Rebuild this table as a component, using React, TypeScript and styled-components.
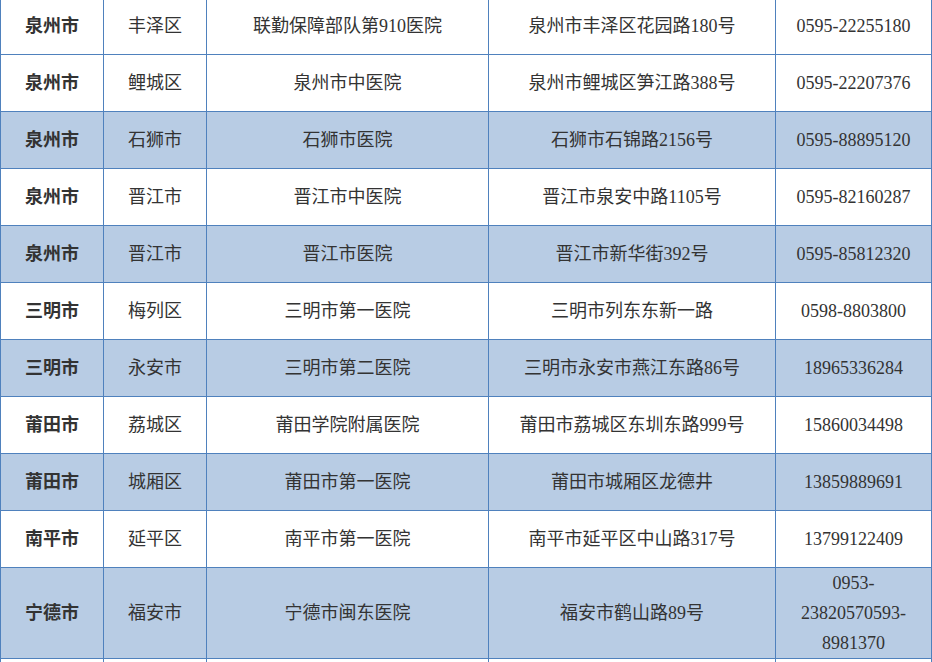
import React from "react";
import styled, { createGlobalStyle } from "styled-components";

const GlobalStyle = createGlobalStyle`
  html, body { margin: 0; padding: 0; background: #ffffff; }
  body { overflow: hidden; }
`;

const Table = styled.table`
  border-collapse: collapse;
  table-layout: fixed;
  width: 931px;
  margin-top: -3px;
  font-family: "Liberation Serif", "Noto Sans CJK SC", serif;
  font-size: 18px;
  color: #333333;
`;

const Col = styled.col<{ $w: number }>`
  width: ${(p) => p.$w}px;
`;

const Row = styled.tr<{ $shaded: boolean }>`
  background: ${(p) => (p.$shaded ? "#b8cce4" : "#ffffff")};
`;

const Cell = styled.td<{ $bold?: boolean }>`
  border: 1px solid #4f81bd;
  height: 57px;
  padding: 0 4px;
  box-sizing: border-box;
  text-align: center;
  vertical-align: middle;
  line-height: 30px;
  font-weight: ${(p) => (p.$bold ? 700 : 400)};
  white-space: nowrap;
`;

type Item = {
  city: string;
  district: string;
  hospital: string;
  address: string;
  phone: string[];
  shaded: boolean;
};

const rows: Item[] = [
  { city: "泉州市", district: "丰泽区", hospital: "联勤保障部队第910医院", address: "泉州市丰泽区花园路180号", phone: ["0595-22255180"], shaded: false },
  { city: "泉州市", district: "鲤城区", hospital: "泉州市中医院", address: "泉州市鲤城区笋江路388号", phone: ["0595-22207376"], shaded: false },
  { city: "泉州市", district: "石狮市", hospital: "石狮市医院", address: "石狮市石锦路2156号", phone: ["0595-88895120"], shaded: true },
  { city: "泉州市", district: "晋江市", hospital: "晋江市中医院", address: "晋江市泉安中路1105号", phone: ["0595-82160287"], shaded: false },
  { city: "泉州市", district: "晋江市", hospital: "晋江市医院", address: "晋江市新华街392号", phone: ["0595-85812320"], shaded: true },
  { city: "三明市", district: "梅列区", hospital: "三明市第一医院", address: "三明市列东东新一路", phone: ["0598-8803800"], shaded: false },
  { city: "三明市", district: "永安市", hospital: "三明市第二医院", address: "三明市永安市燕江东路86号", phone: ["18965336284"], shaded: true },
  { city: "莆田市", district: "荔城区", hospital: "莆田学院附属医院", address: "莆田市荔城区东圳东路999号", phone: ["15860034498"], shaded: false },
  { city: "莆田市", district: "城厢区", hospital: "莆田市第一医院", address: "莆田市城厢区龙德井", phone: ["13859889691"], shaded: true },
  { city: "南平市", district: "延平区", hospital: "南平市第一医院", address: "南平市延平区中山路317号", phone: ["13799122409"], shaded: false },
  { city: "宁德市", district: "福安市", hospital: "宁德市闽东医院", address: "福安市鹤山路89号", phone: ["0953-", "23820570593-", "8981370"], shaded: true },
];

const widths = [103, 103, 282, 287, 156];

export default function App() {
  return (
    <>
      <GlobalStyle />
      <Table>
        <colgroup>
          {widths.map((w, i) => (
            <Col key={i} $w={w} />
          ))}
        </colgroup>
        <tbody>
          {rows.map((r, i) => (
            <Row key={i} $shaded={r.shaded}>
              <Cell $bold>{r.city}</Cell>
              <Cell>{r.district}</Cell>
              <Cell>{r.hospital}</Cell>
              <Cell>{r.address}</Cell>
              <Cell>
                {r.phone.map((p, j) => (
                  <React.Fragment key={j}>
                    {j > 0 && <br />}
                    {p}
                  </React.Fragment>
                ))}
              </Cell>
            </Row>
          ))}
          <Row $shaded={false}>
            {widths.map((_, i) => (
              <Cell key={i} />
            ))}
          </Row>
        </tbody>
      </Table>
    </>
  );
}
